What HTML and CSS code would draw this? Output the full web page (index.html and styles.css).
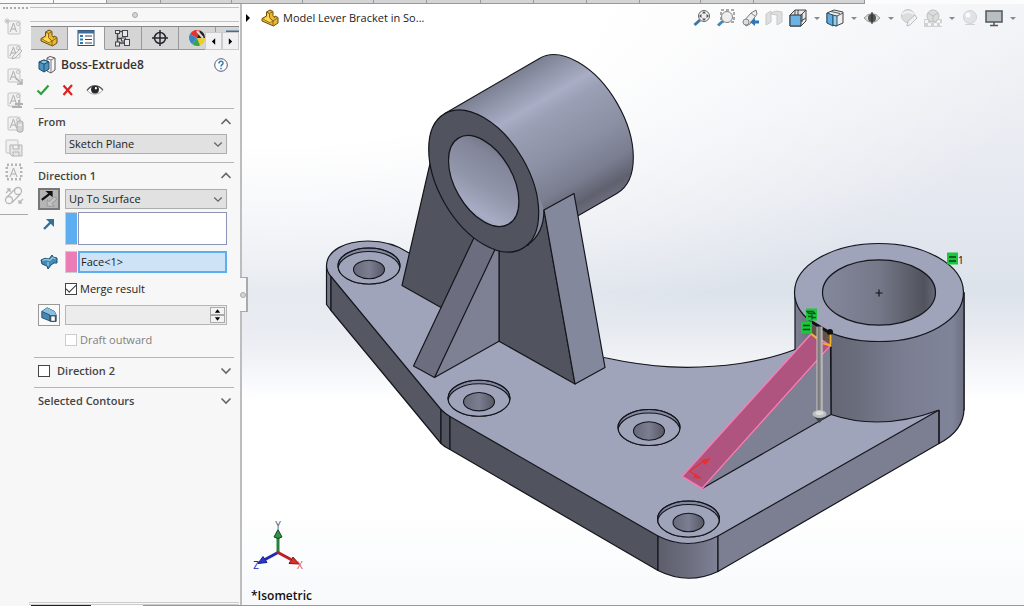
FILE: index.html
```html
<!DOCTYPE html>
<html lang="en">
<head>
<meta charset="utf-8">
<title>Model Lever Bracket</title>
<meta name="viewport" content="width=device-width, initial-scale=1">
<link rel="stylesheet" href="styles.css">
</head>
<body>
<svg class="defs" aria-hidden="true">
  <symbol id="part" viewBox="0 0 18 18">
    <path d="M1 9.500l4.500-2.500V3L9 1l3 1.500v4l1.500 2L14 7l3 1.500v5.500L12.500 17 1 12z" fill="#e9b92f" stroke="#6b4d13"/>
    <path d="M5.500 3l3 1.500v4l3.500 3.500v4.500M8.500 4.500L12 2.500M12 12l4.500-3M1.500 9.500l7 4 3.500-1.500" fill="none" stroke="#8a651a"/>
    <path d="M6.500 4.500l1.500.8v4l3 3-2.500.8-5.500-3 3.500-2z" fill="#ffdc55"/>
  </symbol>
  <symbol id="annot" viewBox="0 0 20 20">
    <rect x="4" y="3" width="12" height="13" rx="1" fill="#f1f1f1" stroke="#c4c4c4"/>
    <path d="M6 14l3.500-9 3 9M7 11h4.500" fill="none" stroke="#adadad"/>
    <circle cx="14" cy="6" r="1.500" fill="#fff" stroke="#bbb"/>
  </symbol>
  <symbol id="down" viewBox="0 0 12 8"><path d="M1.500 1.500L6 6l4.500-4.500" fill="none" stroke="currentColor" stroke-width="1.600"/></symbol>
  <symbol id="up" viewBox="0 0 12 8"><path d="M1.500 6L6 1.500 10.500 6" fill="none" stroke="currentColor" stroke-width="1.600"/></symbol>
  <symbol id="eye" viewBox="0 0 20 16">
    <path d="M1 8.500C5 2 14 1.500 19 8c-5 6.500-14 6-18 .5z" fill="#fff" stroke="#999"/>
    <path d="M1 8.500C5 2 14 1.500 19 8" fill="none" stroke="#555" stroke-width="1.500"/>
    <circle cx="10" cy="7.500" r="4.500" fill="#26262c"/><circle cx="11" cy="6" r="1.300" fill="#fff"/>
  </symbol>
</svg>

<div class="ribbon" aria-hidden="true">
  <span class="lit w54"></span><span class="lit w53"></span><span class="w54"></span><span class="w71"></span><span class="w71"></span><span class="w71"></span><span class="w53"></span><span class="w54"></span><span class="w53"></span><span class="w53"></span><span class="w53"></span><span class="w61"></span><span class="w53"></span><span class="rest"></span>
</div>

<div class="workspace">
  <nav class="rail" aria-label="Annotation tools">
    <div class="rail-grip"></div>
    <button aria-label="New note"><svg viewBox="0 0 20 20"><use href="#annot"/><path d="M3 0v6M0 3h6M1 1l4 4M5 1L1 5" stroke="#bbb" stroke-width=".8"/></svg></button>
    <button aria-label="Edit note"><svg viewBox="0 0 20 20"><use href="#annot"/><path d="M8 17l1-3 7-7 2 2-7 7z" fill="#eee" stroke="#b5b5b5"/></svg></button>
    <button aria-label="Move note"><svg viewBox="0 0 20 20"><use href="#annot"/><path d="M12 12l6 6M18 13v5h-5" fill="none" stroke="#b0b0b0" stroke-width="1.500"/></svg></button>
    <button aria-label="Add note"><svg viewBox="0 0 20 20"><use href="#annot"/><path d="M15 10v8M11 14h8M8 17h10" fill="none" stroke="#b0b0b0" stroke-width="1.800"/></svg></button>
    <button aria-label="Lock note"><svg viewBox="0 0 20 20"><use href="#annot"/><rect x="13" y="7" width="6" height="11" rx="2" fill="#d2d2d2" stroke="#aaa"/><path d="M14 11h4" stroke="#fff"/></svg></button>
    <button aria-label="Save note"><svg viewBox="0 0 20 20"><rect x="2" y="2" width="12" height="13" rx="1" fill="#f1f1f1" stroke="#c4c4c4"/><path d="M6 7h12v11H8l-2-2zM9 7v4h6V7M9 18v-4h6v4" fill="#e6e6e6" stroke="#b5b5b5"/></svg></button>
    <button aria-label="Select note"><svg viewBox="0 0 20 20"><rect x="3" y="3" width="14" height="14" fill="none" stroke="#b5b5b5" stroke-width="3" stroke-dasharray="2 2"/><rect x="4" y="4" width="12" height="12" fill="#f3f3f3"/><path d="M6 15l3.500-9 3.500 9M7 12h5" fill="none" stroke="#adadad"/></svg></button>
    <button aria-label="Link notes"><svg viewBox="0 0 20 20"><g fill="none" stroke="#b8b8b8" stroke-width="1.300"><circle cx="5" cy="14" r="3.500"/><circle cx="14" cy="5" r="3.500"/><path d="M2.500 11.500l9-9M7.500 17l9-9M2 7l4-4M3 3h3v3M19 13l-4 4M15 14v3h3"/></g></svg></button>
  </nav>

  <aside class="panel">
    <div class="panel-grip"><i class="dot"></i></div>
    <div class="tabs" role="tablist">
      <button role="tab" aria-label="Feature tree"><svg class="i18"><use href="#part"/></svg></button>
      <button role="tab" aria-label="Properties" aria-selected="true"><svg class="i18" viewBox="0 0 18 18"><rect x="1" y="1.500" width="16" height="15" fill="#fff" stroke="#334b63"/><path d="M1 3h16" stroke="#3c6f9d" stroke-width="3"/><path d="M3 7h3M3 10.500h3M3 14h3" stroke="#2e78ae" stroke-width="2"/><path d="M8 7h7M8 10.500h7M8 14h7" stroke="#444"/></svg></button>
      <button role="tab" aria-label="Configurations"><svg class="i18" viewBox="0 0 18 18" fill="#e8e8e8" stroke="#44444c"><path d="M3.500 1v16M3.500 2.500h7M3.500 9.500h5M3.500 14h8" fill="none" stroke-width="1.500"/><rect x="1.500" y="1.500" width="4" height="3"/><rect x="8.500" y="1.500" width="5" height="6"/><rect x="7.500" y="9" width="4" height="3"/><rect x="10.500" y="10.500" width="5" height="6"/><rect x="1.500" y="13" width="4" height="4"/></svg></button>
      <button role="tab" aria-label="Dimensions"><svg class="i18" viewBox="0 0 18 18" fill="none" stroke="#26262e" stroke-width="1.500"><circle cx="9" cy="9" r="5.500"/><path d="M9 1v16M1 9h16"/></svg></button>
      <button role="tab" aria-label="Display"><svg class="i18" viewBox="0 0 18 18"><path d="M9 9L2 5a8 8 0 0 1 10-3.500z" fill="#e3342e"/><path d="M9 9l3-7.500A8 8 0 0 1 17 9z" fill="#222"/><path d="M9 9h8a8 8 0 0 1-5 7.500z" fill="#f0cd2e"/><path d="M9 9l3 7.500A8 8 0 0 1 4 15z" fill="#3aa546"/><path d="M9 9l-5 6A8 8 0 0 1 2 5z" fill="#3784c6"/><path d="M9 2l6 7" stroke="#ddd" stroke-width="2"/></svg></button>
      <button role="tab" aria-label="More"><svg class="i18" viewBox="0 0 18 18"><path d="M1 3h16" stroke="#3c6f9d" stroke-width="3"/></svg></button>
      <div class="tab-scroll">
        <button aria-label="Previous tabs"><svg viewBox="0 0 6 8"><path d="M5 0v8L1 4z"/></svg></button>
        <button aria-label="Next tabs"><svg viewBox="0 0 6 8"><path d="M1 0v8l4-4z"/></svg></button>
      </div>
    </div>

    <header class="title">
      <svg class="i18" viewBox="0 0 18 18"><path d="M9 2l3-1.500L17 2v12l-4 3-4-2z" fill="#fafafa" stroke="#555"/><path d="M13 4v13M9 2.500l4 1.500 4-2" fill="none" stroke="#777"/><path d="M1 6l5-2 5 2v7l-5 3-5-3z" fill="#4e93bd" stroke="#1f4f72"/><path d="M1 6l5 2 5-2-5-2z" fill="#8cc3e2" stroke="#1f4f72"/><path d="M6 8v8" stroke="#1f4f72"/></svg>
      <h1>Boss-Extrude8</h1>
      <button aria-label="Help"><svg viewBox="0 0 14 14"><circle cx="7" cy="7" r="6.300" fill="#fff" stroke="#4f5d73"/><path d="M5 5.500C5 2.500 9.300 2.700 9 5.300 8.800 6.700 7 6.700 7 8.500M7 9.800v1.500" fill="none" stroke="#2f7cae" stroke-width="1.500"/></svg></button>
    </header>
    <div class="actions">
      <button aria-label="OK"><svg viewBox="0 0 14 12"><path d="M1.500 6.500L5 10l7.500-8.500" fill="none" stroke="#2f9f3b" stroke-width="2.200"/></svg></button>
      <button aria-label="Cancel"><svg viewBox="0 0 14 12"><path d="M2.500 1.500l8.500 9.500M11 1L2.500 11" fill="none" stroke="#dc2222" stroke-width="2.200"/></svg></button>
      <button aria-label="Preview"><svg class="eye"><use href="#eye"/></svg></button>
    </div>

    <section>
      <h2><label for="from">From</label><button aria-label="Collapse From"><svg class="chev"><use href="#up"/></svg></button></h2>
      <div class="row">
        <span></span>
        <div class="select"><select id="from"><option>Sketch Plane</option></select><svg class="chev small"><use href="#down"/></svg></div>
      </div>
      <div class="end"></div>
    </section>

    <section>
      <h2><span>Direction 1</span><button aria-label="Collapse Direction 1"><svg class="chev"><use href="#up"/></svg></button></h2>
      <div class="row">
        <button class="square pressed" aria-label="Reverse direction"><svg viewBox="0 0 20 20"><path d="M18 8v3l-5 4 3 3H8v-7l2 2 6-5z" fill="#c4c4c4" stroke="#8c8c8c" stroke-width=".8"/><path d="M2 11l9-7" stroke="#111" stroke-width="2.500"/><path d="M6 1h8v7z" fill="#111"/></svg></button>
        <div class="select"><select aria-label="End condition"><option>Up To Surface</option></select><svg class="chev small"><use href="#down"/></svg></div>
      </div>
      <div class="row tight">
        <svg class="arrow" viewBox="0 0 12 12"><path d="M1 11l7-7" stroke="#32709a" stroke-width="2.400"/><path d="M3 1h8v8z" fill="#32709a"/></svg>
        <div class="pick blue"><i></i><textarea aria-label="Direction of extrusion"></textarea></div>
      </div>
      <div class="row loose">
        <svg class="surface" viewBox="0 0 18 16"><path d="M1 6q4-3 8-1l3-4 1 2 4 1v5q-3-1-6 2l-3 4-1-3-5-2z" fill="#4389b3" stroke="#214e6c"/><path d="M2.500 6.500q4-2 7.500 0l2.500-3 3 1.500M8 12V8" fill="none" stroke="#8fc8e8" stroke-width="1.300"/></svg>
        <div class="pick pink"><i></i><input type="text" value="Face&lt;1&gt;" aria-label="Face"></div>
      </div>
      <div class="row loose">
        <span></span>
        <label class="check"><input type="checkbox" checked>Merge result</label>
      </div>
      <div class="row near">
        <button class="square" aria-label="Draft"><svg viewBox="0 0 20 20"><path d="M2 6l6-4 8 4 2 4v7h-6l-10-4z" fill="#4389b3" stroke="#1f4d6d"/><path d="M2 6l9 4h7l-2-4-8-4z" fill="#89c0df"/><path d="M2 6l9 4v7" fill="none" stroke="#1f4d6d"/><path d="M12 11h5v6h-5z" fill="#fff" stroke="#333"/></svg></button>
        <div class="spin"><input type="text" aria-label="Draft angle"><div><button aria-label="Increase"><svg viewBox="0 0 8 4"><path d="M1 4l3-4 3 4z"/></svg></button><button aria-label="Decrease"><svg viewBox="0 0 8 4"><path d="M1 0l3 4 3-4z"/></svg></button></div></div>
      </div>
      <div class="row near">
        <span></span>
        <label class="check off"><input type="checkbox" disabled>Draft outward</label>
      </div>
      <div class="end"></div>
    </section>

    <section>
      <h2><label class="check two"><input type="checkbox">Direction 2</label><button aria-label="Expand Direction 2"><svg class="chev"><use href="#down"/></svg></button></h2>
      <div class="end short"></div>
    </section>
    <section>
      <h2><span>Selected Contours</span><button aria-label="Expand Selected Contours"><svg class="chev"><use href="#down"/></svg></button></h2>
    </section>
    <div class="panel-foot"></div>
    <button class="handle" aria-label="Collapse panel"><i class="dot"></i></button>
  </aside>

  <main class="viewport">
    <svg class="model" viewBox="242 4 782 600" role="img" aria-label="Lever bracket model, isometric view">
      <defs>
        <linearGradient id="tube" gradientUnits="userSpaceOnUse" x1="444.800" y1="113.100" x2="522.600" y2="247.900">
          <stop offset="0" stop-color="#7c8093"/><stop offset=".1" stop-color="#9094a9"/><stop offset=".24" stop-color="#a9adc5"/><stop offset=".34" stop-color="#9b9fb5"/><stop offset=".6" stop-color="#8c90a4"/><stop offset=".8" stop-color="#7a7d8f"/><stop offset=".93" stop-color="#5f616f"/><stop offset="1" stop-color="#6c6e7d"/>
        </linearGradient>
        <linearGradient id="bore" gradientUnits="userSpaceOnUse" x1="459" y1="138" x2="508" y2="224">
          <stop offset="0" stop-color="#666878"/><stop offset=".25" stop-color="#83869a"/><stop offset=".55" stop-color="#9296ab"/><stop offset=".8" stop-color="#a8acc4"/><stop offset="1" stop-color="#8e92a7"/>
        </linearGradient>
        <linearGradient id="boss" gradientUnits="userSpaceOnUse" x1="795" y1="0" x2="964" y2="0">
          <stop offset="0" stop-color="#7e8194"/><stop offset=".12" stop-color="#696b7a"/><stop offset=".22" stop-color="#666876"/><stop offset=".35" stop-color="#696c7b"/><stop offset=".65" stop-color="#7b7e91"/><stop offset=".93" stop-color="#80849a"/><stop offset="1" stop-color="#6e7082"/>
        </linearGradient>
        <linearGradient id="hole"><stop offset="0" stop-color="#84889b"/><stop offset=".5" stop-color="#757889"/><stop offset=".9" stop-color="#50525c"/><stop offset="1" stop-color="#676978"/></linearGradient>
        <linearGradient id="smallhole"><stop offset="0" stop-color="#686a7a"/><stop offset=".5" stop-color="#7b7e91"/><stop offset="1" stop-color="#565864"/></linearGradient>
        <linearGradient id="corner"><stop offset="0" stop-color="#5c5e6b"/><stop offset=".5" stop-color="#6c6e7e"/><stop offset="1" stop-color="#7f8296"/></linearGradient>
        <linearGradient id="rod"><stop offset="0" stop-color="#c7c7c7"/><stop offset=".3" stop-color="#777"/><stop offset=".6" stop-color="#8a8686"/><stop offset="1" stop-color="#d5d5d5"/></linearGradient>
        <clipPath id="sink"><ellipse cx="0" cy="0" rx="31" ry="18"/></clipPath>
        <g id="cb" stroke-width="1.100">
          <ellipse rx="31" ry="18" fill="#8286a0"/>
          <g clip-path="url(#sink)"><ellipse cy="3.500" rx="31" ry="18" fill="#a0a4bb"/></g>
          <ellipse rx="31" ry="18" fill="none"/>
          <ellipse cy="3.500" rx="15.500" ry="9.200" fill="url(#smallhole)"/>
        </g>
      </defs>
      <g stroke="#15161b" stroke-width="1.200" stroke-linejoin="round">
        <path d="M795 292v70l36 55 108 26Q964 430 964 408V292z" fill="url(#boss)"/>
        <path d="M326.500 265C327 250 345 240.500 368 240.500c15 0 28 3 41 12L590 352q14 4 15 5.500C650 366 690 370 740 363q32-5 55-14l36 65q50 17 108-4.500L718 536q-30 14-60 0L450 416l-9-7L331 276q-5-6-4.500-11z" fill="#a0a4bb" stroke="none"/>
        <path d="M326.500 265C327 250 345 240.500 368 240.500c15 0 28 3 41 12M604 357C650 367 690 370 740 363q32-5 55-14" fill="none"/>
        <path d="M326.500 265q0 6 4.500 11v34l-4.500-6z" fill="#74778a"/>
        <path d="M331 276l110 133v34L331 310z" fill="#555762"/>
        <path d="M441 409q4 4 9 7v33q-6-3-9-6z" fill="#51535e"/>
        <path d="M450 416l208 119.500v34.500L450 449z" fill="#51535e"/>
        <path d="M658 535.500q30 15 60 0V571q-30 14-60-1z" fill="url(#corner)"/>
        <path d="M718 535.500L939 409.500V443L718 571z" fill="#7c7f91"/>
        <use href="#cb" x="369" y="265.500"/><use href="#cb" x="479" y="397.700"/><use href="#cb" x="649" y="427"/><use href="#cb" x="688.500" y="518.500"/>

        <path d="M831 343v71q50 17 108-4.500l25-1V292z" fill="url(#boss)" stroke="none"/>
        <path d="M831 343v71q50 17 108-4.500" fill="none"/>
        <path d="M964 292v118M939 409.500V443" fill="none"/>
        <ellipse cx="879" cy="292" rx="84.500" ry="49" fill="#a0a4bb"/>
        <ellipse cx="879" cy="292" rx="56.500" ry="32.700" fill="url(#hole)"/>
        <path d="M875.500 292.500h7M879 289v7"/>
        <path d="M830.500 345L702 488l129-74z" fill="#7e8194"/>

        <path d="M430 163l-28 122 39 22 40-60z" fill="#51535e"/>
        <path d="M444.800 113.100L539.400 57.900A77.800 44.900 60 0 1 617.200 192.700L528 244z" fill="url(#tube)" stroke-width="1.100"/>
        <path d="M499 245v95.700L575 383.500 544 209l-16 36z" fill="#51535e"/>
        <path d="M544 209q0 24-16 35l-10-20 20-30z" fill="#85899c" stroke="none"/>
        <path d="M544 209q0 24-16 35" fill="none"/>
        <path d="M544 209.500l30-16.500 31 174-30 16.500z" fill="#84889c"/>
        <path d="M492 245h7v95.700L434.500 377z" fill="#7e8093"/>
        <path d="M475 235l20 14-60.500 128-21-11.500z" fill="#6c6e80"/>
        <ellipse cx="483.700" cy="180.500" rx="77.800" ry="44.900" transform="rotate(60 483.700 180.500)" fill="#51535e"/>
        <ellipse cx="483.700" cy="180.500" rx="49.800" ry="28.700" transform="rotate(60 483.700 180.500)" fill="url(#bore)"/>
      </g>

      <path d="M811 324l20 8v13l-8-3-12-8z" fill="#625346"/>
      <path d="M811 321l20 12" stroke="#111" stroke-width="3"/>
      <circle cx="830" cy="331.500" r="3" fill="#111"/>
      <path d="M811 333.500L682 476l20 12L830.500 345z" fill="#ae547f" stroke="#f17fb5" stroke-width="1.600"/>
      <path d="M811 333l7 6M823 343l7.500 2v-11" fill="none" stroke="#f3b41e" stroke-width="1.800"/>
      <path d="M826 337h3M825 340h3" stroke="#2d9a43" stroke-dasharray="1 1"/>
      <rect x="816.500" y="326" width="6" height="86" rx="1" fill="url(#rod)"/>
      <path d="M814 416h11l-5.500 6.500z" fill="#3f434c"/>
      <ellipse cx="819.500" cy="413.500" rx="7" ry="4" fill="#bdbdbd"/><ellipse cx="819.500" cy="412.500" rx="4" ry="2" fill="#dcdcdc"/>
      <path d="M703 461l-13.500 10 7 4" fill="none" stroke="#e8302c" stroke-width="1.200"/>
      <path d="M702 460l8-2-5 6zM695 473.500l6 4-7-.5z" fill="#e8302c" stroke="#e8302c"/>
      <g fill="#19c83c">
        <rect x="801" y="321" width="11" height="12"/><rect x="806" y="308" width="11" height="12"/><rect x="947" y="252" width="11" height="12"/>
      </g>
      <path d="M803 325h7M803 329h7M949 256.500h7M949 260.500h7" stroke="#123a1b" stroke-width="1.500"/>
      <path d="M807 311h6l2 2h-6zM808 316h4v3M812 314v3h4" fill="none" stroke="#0a5a1c" stroke-width="1.300"/>
      <text x="958" y="263" class="tag">1</text>

      <g stroke-width="3" fill="none">
        <path d="M278 552v-16" stroke="#27823a"/><path d="M278 552l13 7" stroke="#bb2024"/><path d="M278 552l-13 7" stroke="#2129b5"/>
      </g>
      <path d="M278 529l4 7.500q-4 3-8 0z" fill="#2f9443" stroke="#174922"/>
      <path d="M299 563.500l-10-.5 4-6.500z" fill="#df2c2c" stroke="#7d1717"/>
      <path d="M258 563l5-7 4 6z" fill="#2a36dc" stroke="#151c78"/>
      <circle cx="278" cy="552" r="1.500" fill="#bb2024"/>
      <g class="axis"><text x="278" y="528" fill="#666">Y</text><text x="300" y="568" fill="#e75461">X</text><text x="256" y="568" fill="#2129d0">Z</text></g>
    </svg>

    <div class="overlay">
      <div class="crumb">
        <button aria-label="Expand tree"><svg viewBox="0 0 6 8"><path d="M1 0v8l4-4z"/></svg></button>
        <svg class="i18"><use href="#part"/></svg>
        <span>Model Lever Bracket in So...</span>
      </div>
      <div class="hud" role="toolbar" aria-label="View">
        <button aria-label="Zoom to fit"><svg viewBox="0 0 18 18"><path d="M1.500 16L7 11" stroke="#3a76a8" stroke-width="3"/><circle cx="11" cy="7" r="5.500" fill="#eee" stroke="#666"/><path d="M11 2l2 2.500H9zM11 12l2-2.500H9zM6 7l2.500-2v4zM16 7l-2.500-2v4z" fill="#555"/></svg></button>
        <button aria-label="Zoom to area"><svg viewBox="0 0 18 18"><rect x="4" y="1" width="13" height="12" fill="none" stroke="#555" stroke-dasharray="3 2"/><path d="M1 16.500L6 12" stroke="#3a8abf" stroke-width="3"/><circle cx="10" cy="8" r="5.500" fill="#eee" stroke="#888"/></svg></button>
        <button aria-label="Previous view"><svg viewBox="0 0 18 18"><path d="M2 13l8-9 5-3 1 4-7 10-4 2z" fill="#eee" stroke="#777"/><circle cx="5" cy="13" r="3" fill="#ddd" stroke="#888"/><path d="M10 4l4 3" stroke="#888"/><path d="M18 13h-5" stroke="#2c77b2" stroke-width="3"/><path d="M14 9v8l-5-4z" fill="#2c77b2"/></svg></button>
        <button class="dim" aria-label="Section view"><svg viewBox="0 0 18 18"><path d="M1 5l5-3v11l-5 3zM6 4l5-2 6 1v10l-5 3V6l-6-1z" fill="#ccc" stroke="#aaa"/></svg></button>
        <button aria-label="View orientation"><svg viewBox="0 0 18 18"><path d="M1 6l5-5h11v11l-5 5H1z" fill="#e8e8e8" stroke="#444"/><path d="M1 6h11v11H1z" fill="#6cb2e2" stroke="#333"/><path d="M12 6l5-5M6 1v5M9 1v5M12 12l5-3M13 5v8" stroke="#444"/></svg></button>
        <button class="drop" aria-label="Orientation options"></button>
        <button aria-label="Display style"><svg viewBox="0 0 18 18"><path d="M1 4l7-3 9 2v11l-7 3-9-3z" fill="#eee" stroke="#444"/><path d="M1 4l6 2v11l-6-3z" fill="#62addd" stroke="#27526f"/><path d="M7 6l4 1v10l-4-1z" fill="#9acbe9" stroke="#27526f"/><path d="M11 7l6-3M5 2.500l9 2" fill="none" stroke="#555"/></svg></button>
        <button class="drop" aria-label="Display options"></button>
        <button aria-label="Hide or show items"><svg viewBox="0 0 18 18"><path d="M1 9q8-9 16 0-8 9-16 0z" fill="#ddd" stroke="#999"/><circle cx="9" cy="9" r="4" fill="#555"/><path d="M9 3v12" stroke="#222"/></svg></button>
        <button class="drop" aria-label="Visibility options"></button>
        <button class="dim" aria-label="Edit appearance"><svg viewBox="0 0 18 18"><circle cx="8" cy="7" r="6.500" fill="#ccc" stroke="#aaa"/><path d="M2 5q6-4 12 0" stroke="#eee" fill="none" stroke-width="2"/><path d="M7 17l1-5 7-6 2 3-7 7z" fill="#eee" stroke="#999"/></svg></button>
        <button class="dim" aria-label="Apply scene"><svg viewBox="0 0 18 18"><path d="M0 10h18v8H0z" fill="#bbb"/><path d="M1 12.500h16M4 15.500h14" stroke="#fff" stroke-width="2.500" stroke-dasharray="3 3"/><circle cx="9" cy="7" r="6" fill="#ccc" stroke="#999"/><path d="M9 7l5-3M9 7L4 4M9 7v6" stroke="#999"/></svg></button>
        <button class="drop" aria-label="Scene options"></button>
        <button class="dim" aria-label="Render"><svg viewBox="0 0 18 18"><circle cx="9" cy="8" r="6.500" fill="#d5d7da" stroke="#bbb"/><circle cx="7" cy="6" r="2.500" fill="#fff"/><path d="M4 15.500h10" stroke="#bbb"/></svg></button>
        <button aria-label="View settings"><svg viewBox="0 0 18 18"><rect x="1" y="2" width="16" height="11" fill="#b7bec4" stroke="#555" stroke-width="1.500"/><path d="M9 13v3M5 16.500h8" stroke="#555" stroke-width="1.500"/></svg></button>
        <button class="drop" aria-label="Setting options"></button>
      </div>
      <p class="view-name">*Isometric</p>
    </div>
  </main>
</div>
<div class="status" aria-hidden="true"><i class="dark"></i><i class="light"></i><i class="line"></i></div>
</body>
</html>
```

FILE: styles.css
```css
* { box-sizing: border-box; }
body {
  margin: 0;
  min-height: 100vh;
  display: flex;
  flex-direction: column;
  background: #f7f7f7;
  color: #222;
  font: 11px/16px "Open Sans", "Noto Sans", sans-serif;
}
button, input, select, textarea { font: inherit; color: inherit; margin: 0; }
button { border: 0; padding: 0; background: none; display: grid; place-items: center; }
h1, h2, p { margin: 0; }
i { display: block; }
.defs { position: absolute; width: 0; height: 0; }
.i18 { width: 18px; height: 18px; flex: none; }

.ribbon { display: flex; height: 4px; background: #fcfcfd; }
.ribbon span { background: #d4d4d4; border-right: 1px solid #999; border-bottom: 1px solid #999; }
.ribbon .lit { background: #fafafa; }
.w53 { width: 53px; }
.w54 { width: 54px; }
.w61 { width: 61px; }
.w71 { width: 71px; }
.ribbon .rest { width: 111px; }

.workspace { flex: 1; display: grid; grid-template-columns: 28px 214px minmax(0, 1fr); }

.rail { align-self: start; display: flex; flex-direction: column; align-items: center; padding-bottom: 6px; border-bottom: 1px solid #aaa; }
.rail-grip { align-self: stretch; margin: 2px 0 7px 3px; height: 3px; border-bottom: 2px dotted #aaa; }
.rail button { width: 24px; height: 24px; }
.rail svg { width: 20px; height: 20px; }

.panel { position: relative; display: flex; flex-direction: column; border-right: 2px solid #bdbdbd; }
.panel-grip { display: grid; place-items: center; height: 15px; margin: 3px 1px 4px 2px; border: solid #c0c0c0; border-width: 1px 0; }
.dot { width: 6px; height: 6px; border: 1px solid #aaa; border-radius: 50%; background: #d5d5d5; }

.tabs { position: relative; display: flex; height: 24px; margin: 0 1px 3px 3px; overflow: hidden; border-top: 1px solid #888; }
.tabs > button { flex: none; width: 37px; background: #d5d5d5; border-right: 1px solid #999; border-bottom: 1px solid #999; }
.tabs > button[aria-selected] { background: #f9f9f9; border-bottom-color: #f9f9f9; }
.tab-scroll { position: absolute; right: 0; bottom: 0; display: flex; height: 18px; }
.tab-scroll button { width: 17px; background: #f0f0f3; border: 1px solid #ccc; }
.tab-scroll svg { width: 5px; height: 7px; }

.title { display: flex; align-items: center; gap: 5px; height: 24px; margin: 0 12px 1px 10px; }
.title h1 { flex: 1; font-size: 12px; line-height: 16px; font-weight: 600; color: #333; }
.title button svg { width: 14px; height: 14px; }
.actions { display: flex; align-items: center; gap: 11px; height: 24px; margin: 0 8px 6px; }
.actions svg { width: 14px; height: 12px; }
.actions .eye { width: 18px; height: 14px; }

section { margin: 0 6px; padding: 0 2px 0 4px; border-top: 1px solid #b5b5b5; }
h2 { display: flex; align-items: center; justify-content: space-between; height: 25px; font-size: 11px; font-weight: 600; color: #444; }
.chev { width: 12px; height: 8px; color: #666; display: block; }
.chev.small { width: 10px; height: 7px; }
.row { display: grid; grid-template-columns: 22px minmax(0, 1fr); gap: 5px; align-items: center; margin-right: 5px; }
.tight { margin-top: 2px; }
.near { margin-top: 5px; }
.loose { margin-top: 6px; }
.end { height: 8px; }
.end.short { height: 4px; }

.select { display: grid; align-items: center; }
.select select { grid-area: 1 / 1; width: 100%; height: 20px; padding: 0 3px; appearance: none; border: 1px solid #adadad; border-radius: 0; background: #e1e1e1; }
.select svg { grid-area: 1 / 1; justify-self: end; margin-right: 4px; pointer-events: none; }
.square { width: 22px; height: 22px; border: 1px solid #999; background: #fafafa; }
.square.pressed { border: 2px solid #777; background: #b5b5b5; }
.square svg { width: 18px; height: 18px; }
.arrow { width: 12px; height: 12px; align-self: start; justify-self: center; margin-top: 6px; }
.surface { width: 18px; height: 16px; justify-self: center; }

.pick { display: flex; gap: 1px; }
.pick i { width: 12px; border: 1px solid #ccc; border-right: 0; }
.pick input, .pick textarea { display: block; flex: 1; min-width: 0; padding: 0 2px; border: 1px solid #8c93b5; border-radius: 0; background: #fff; outline: 0; resize: none; }
.pick textarea { height: 33px; }
.pick input { height: 22px; border: 2px solid #5caeee; padding: 0 1px 2px; background: #cfe3f7; }
.blue i { background: #5caef1; }
.pink i { background: #ec7cb5; }

.check { display: flex; align-items: center; gap: 3px; height: 20px; }
.check input { appearance: none; width: 12px; height: 12px; border: 1px solid #444; background: #fff; display: grid; place-items: center; }
.check input:checked::after { content: ""; width: 9px; height: 4px; margin-bottom: 3px; border: solid #333; border-width: 0 0 1px 1px; transform: rotate(-45deg); }
.check.off { height: 18px; color: #808080; }
.check.off input { border-color: #ccc; }
.check.two { gap: 7px; }

.spin { display: flex; height: 20px; padding: 1px; border: 1px solid #b5b5b5; background: #ececec; }
.spin input { flex: 1; min-width: 0; border: 0; background: none; }
.spin div { display: grid; grid-template-rows: 1fr 1fr; width: 15px; }
.spin button { border: 1px solid #aaa; background: #f3f3f3; }
.spin svg { width: 7px; height: 4px; }

.panel-foot { margin: auto 1px 0 1px; height: 3px; border: solid #ccc; border-width: 1px 0; }
.handle { position: absolute; left: 100%; top: 273px; z-index: 1; width: 8px; height: 35px; border: 1px solid #aaa; border-left: 0; border-right: 2px solid #aaa; background: #f7f7f7; }

.viewport {
  display: grid;
  background:
    radial-gradient(ellipse 100% 58% at 5% 0, #fff 40%, #fff0 100%),
    linear-gradient(#f3f4f7, #e6e9f0 30%, #dde3eb 48%, #e8ebf1 55%, #fff 66%, #fff 84%, #f7f9fb);
}
.viewport > * { grid-area: 1 / 1; min-width: 0; }
.model { width: 100%; height: 100%; display: block; }
.tag { font: 10px "Noto Sans", sans-serif; fill: #111; }
.axis { font: 10px "Noto Sans", sans-serif; text-anchor: middle; }
.overlay { display: grid; grid-template: auto 1fr / auto auto; justify-content: space-between; align-items: start; }
.crumb { display: flex; align-items: center; gap: 4px; height: 28px; padding-left: 3px; }
.crumb button { width: 12px; height: 16px; justify-items: start; }
.crumb button svg { width: 6px; height: 8px; }
.hud { display: flex; align-items: center; height: 28px; padding-right: 5px; }
.hud button { width: 24px; height: 24px; }
.hud svg { width: 18px; height: 18px; }
.hud .drop { width: 13px; }
.hud .drop::after { content: ""; border: solid transparent; border-width: 3px 3px 0; border-top-color: #8a8a8a; }
.hud .dim { opacity: 0.6; }
.view-name { align-self: end; padding: 0 0 1px 9px; font-size: 12px; font-weight: 600; color: #111; }

.status { display: flex; height: 1px; padding-left: 31px; }
.dark { width: 60px; background: #222; }
.light { width: 52px; background: #fff; }
.line { flex: 1; background: #999; }
```
